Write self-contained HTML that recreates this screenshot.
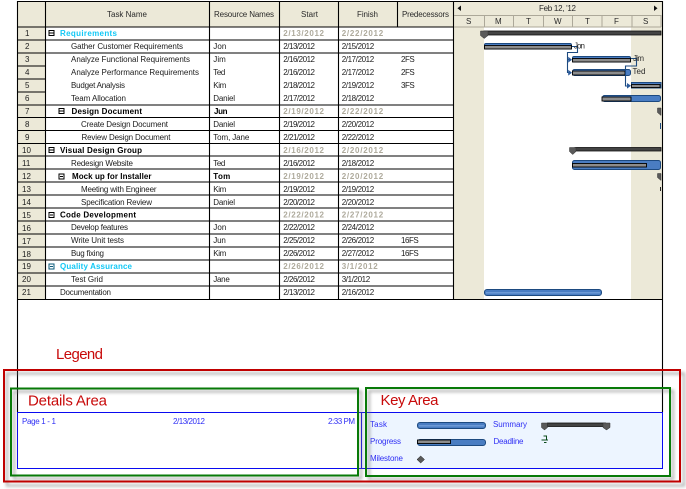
<!DOCTYPE html>
<html><head><meta charset="utf-8"><style>
html,body{margin:0;padding:0;background:#fff;width:686px;height:489px;overflow:hidden}
svg{display:block}
text{font-family:"Liberation Sans",sans-serif;font-size:8px;fill:#1c1c1c}
.b{font-weight:bold;fill:#000}
.c{font-weight:bold;fill:#12c8f5}
.g{font-weight:bold;fill:#aeaa9c}
.h{fill:#2a2a2a}
.f{fill:#2f2ff5}
.r{font-size:15px;fill:#c80a0a}
.l{stroke:#000;stroke-width:1.1;fill:none}
.bar{fill:#4a7dc2;stroke:#1d4a80;stroke-width:1}
.pr{fill:#8c8c8c;stroke:#000;stroke-width:.9}
.con{fill:none;stroke:#1d4a80;stroke-width:1.1}
.sum{fill:#444;stroke:#111;stroke-width:.8}
.ar{fill:#5a5a5a;stroke:#333;stroke-width:.5}
</style></head><body>
<svg width="686" height="489" viewBox="0 0 686 489" xmlns="http://www.w3.org/2000/svg">
<defs><filter id="bl" x="-5%" y="-10%" width="110%" height="120%"><feGaussianBlur stdDeviation="1.6"/></filter></defs>

<!-- backgrounds -->
<rect x="18" y="2" width="27" height="297" fill="#ece9d8"/>
<rect x="45" y="2" width="409" height="25" fill="#ece9d8"/>
<rect x="454" y="2" width="208" height="25" fill="#ece9d8"/>
<rect x="454" y="27" width="30" height="272" fill="#ece9d8"/>
<rect x="631" y="27" width="31" height="272" fill="#ece9d8"/>
<rect x="362" y="412" width="300.5" height="56" fill="#edf5ff"/>

<!-- grid -->
<g class="l">
<path d="M17.5 1.5H662.5"/>
<path d="M18 27H454M18 40H454M18 53H454M18 66H45M18 79H45M18 92H45M18 105H454M18 117.5H454M18 130.5H454M18 143.5H454M18 156H454M18 169H454M18 182H454M18 195H454M18 208H454M18 221H454M18 234H454M18 247H454M18 260H454M18 273H454M18 286H454"/>
<path d="M17.5 299.5H662.5"/>
<path d="M17.5 1V412M45.5 2V299M209.5 2V299M279.5 2V299M338.5 2V299M397.5 2V27M453.5 2V299M662.5 1V412"/>
</g>

<!-- gantt header -->
<g stroke="#aca899" stroke-width="1" fill="none"><path d="M454 15.5H661M454 27H661M484.5 15V27M513.5 15V27M543.5 15V27M572.5 15V27M602 15V27M632 15V27M661 15V27"/></g>
<path d="M461 5.5V11L457.5 8.2Z" fill="#111"/><path d="M654 5.5V11L657.5 8.2Z" fill="#111"/>
<text class="h" x="539" y="11" textLength="37">Feb 12, '12</text>
<text class="h" x="466" y="24" textLength="6">S</text>
<text class="h" x="495" y="24" textLength="7">M</text>
<text class="h" x="526" y="24" textLength="5">T</text>
<text class="h" x="554" y="24" textLength="8">W</text>
<text class="h" x="585" y="24" textLength="5">T</text>
<text class="h" x="614" y="24" textLength="5">F</text>
<text class="h" x="643" y="24" textLength="6">S</text>

<!-- column headers -->
<text class="h" x="107" y="17" textLength="40">Task Name</text>
<text class="h" x="214" y="17" textLength="60">Resource Names</text>
<text class="h" x="301" y="17" textLength="17">Start</text>
<text class="h" x="357" y="17" textLength="21">Finish</text>
<text class="h" x="402" y="17" textLength="47">Predecessors</text>

<!-- ids -->
<g class="h">
<text x="25" y="36">1</text><text x="25" y="49">2</text><text x="25" y="62">3</text><text x="25" y="75">4</text><text x="25" y="88">5</text><text x="25" y="101">6</text><text x="25" y="114">7</text><text x="25" y="127">8</text><text x="25" y="140">9</text>
<text x="22" y="153">10</text><text x="22" y="166">11</text><text x="22" y="179">12</text><text x="22" y="192">13</text><text x="22" y="205">14</text><text x="22" y="218">15</text><text x="22" y="231">16</text><text x="22" y="244">17</text><text x="22" y="257">18</text><text x="22" y="269">19</text><text x="22" y="282">20</text><text x="22" y="295">21</text>
</g>

<!-- minus boxes -->
<g fill="none" stroke="#000" stroke-width="1">
<path d="M49 30.5h5v5h-5zM49 33H54"/>
<path d="M59 108.5h5v5h-5zM59 111H64"/>
<path d="M49 147.5h5v5h-5zM49 150H54"/>
<path d="M59 174h5v5h-5zM60 176.5H63"/>
<path d="M49 212.5h5v5h-5zM50 215H53"/>
<path d="M49 264h5v5h-5zM50 266.5H53" stroke="#0a5a7a"/>
</g>

<!-- task names -->
<text class="c" x="60" y="36" textLength="57">Requirements</text>
<text x="71" y="49" textLength="112">Gather  Customer  Requirements</text>
<text x="71" y="62" textLength="119">Analyze  Functional  Requirements</text>
<text x="71" y="75" textLength="128">Analyze  Performance  Requirements</text>
<text x="71" y="88" textLength="54">Budget Analysis</text>
<text x="71" y="101" textLength="55">Team Allocation</text>
<text class="b" x="71.5" y="114" textLength="70.5">Design Document</text>
<text x="81" y="127" textLength="87">Create Design Document</text>
<text x="81.5" y="140" textLength="89">Review Design Document</text>
<text class="b" x="60" y="153" textLength="82">Visual Design Group</text>
<text x="71" y="166" textLength="62">Redesign Website</text>
<text class="b" x="72" y="179" textLength="79.5">Mock up for Installer</text>
<text x="81" y="192" textLength="75.5">Meeting with Engineer</text>
<text x="81" y="205" textLength="71">Specification Review</text>
<text class="b" x="60" y="217.5" textLength="76">Code Development</text>
<text x="71" y="230" textLength="57">Develop features</text>
<text x="71" y="243" textLength="53">Write Unit tests</text>
<text x="71" y="256" textLength="33">Bug fixing</text>
<text class="c" x="60" y="269" textLength="72">Quality Assurance</text>
<text x="71" y="282" textLength="32">Test Grid</text>
<text x="60" y="295" textLength="51">Documentation</text>

<!-- resources -->
<text x="213.3" y="49" textLength="13">Jon</text>
<text x="213.3" y="62" textLength="12.5">Jim</text>
<text x="213.3" y="75" textLength="12">Ted</text>
<text x="213.3" y="88" textLength="13">Kim</text>
<text x="213.3" y="101" textLength="21.7">Daniel</text>
<text class="b" x="214" y="114" textLength="13.5">Jun</text>
<text x="213.3" y="127" textLength="21.7">Daniel</text>
<text x="213.3" y="140" textLength="36">Tom, Jane</text>
<text x="213.3" y="166" textLength="12">Ted</text>
<text class="b" x="213.3" y="179" textLength="17">Tom</text>
<text x="213.3" y="192" textLength="13">Kim</text>
<text x="213.3" y="205" textLength="21.7">Daniel</text>
<text x="213.3" y="230" textLength="13">Jon</text>
<text x="213.3" y="243" textLength="12.5">Jun</text>
<text x="213.3" y="256" textLength="13">Kim</text>
<text x="213.3" y="282" textLength="16.5">Jane</text>

<!-- start -->
<text class="g" x="283.3" y="36" textLength="40.7">2/13/2012</text>
<text x="283.3" y="49" textLength="31.7">2/13/2012</text>
<text x="283.3" y="62" textLength="31.7">2/16/2012</text>
<text x="283.3" y="75" textLength="31.7">2/16/2012</text>
<text x="283.3" y="88" textLength="31.7">2/18/2012</text>
<text x="283.3" y="101" textLength="31.7">2/17/2012</text>
<text class="g" x="283.3" y="114" textLength="40.7">2/19/2012</text>
<text x="283.3" y="127" textLength="31.7">2/19/2012</text>
<text x="283.3" y="140" textLength="31.7">2/21/2012</text>
<text class="g" x="283.3" y="153" textLength="40.7">2/16/2012</text>
<text x="283.3" y="166" textLength="31.7">2/16/2012</text>
<text class="g" x="283.3" y="179" textLength="40.7">2/19/2012</text>
<text x="283.3" y="192" textLength="31.7">2/19/2012</text>
<text x="283.3" y="205" textLength="31.7">2/20/2012</text>
<text class="g" x="283.3" y="217.5" textLength="40.7">2/22/2012</text>
<text x="283.3" y="230" textLength="31.7">2/22/2012</text>
<text x="283.3" y="243" textLength="31.7">2/25/2012</text>
<text x="283.3" y="256" textLength="31.7">2/26/2012</text>
<text class="g" x="283.3" y="269" textLength="40.7">2/26/2012</text>
<text x="283.3" y="282" textLength="31.7">2/26/2012</text>
<text x="283.3" y="295" textLength="31.7">2/13/2012</text>

<!-- finish -->
<text class="g" x="341.7" y="36" textLength="41.5">2/22/2012</text>
<text x="341.7" y="49" textLength="32.5">2/15/2012</text>
<text x="341.7" y="62" textLength="32.5">2/17/2012</text>
<text x="341.7" y="75" textLength="32.5">2/17/2012</text>
<text x="341.7" y="88" textLength="32.5">2/19/2012</text>
<text x="341.7" y="101" textLength="32.5">2/18/2012</text>
<text class="g" x="341.7" y="114" textLength="41.5">2/22/2012</text>
<text x="341.7" y="127" textLength="32.5">2/20/2012</text>
<text x="341.7" y="140" textLength="32.5">2/22/2012</text>
<text class="g" x="341.7" y="153" textLength="41.5">2/20/2012</text>
<text x="341.7" y="166" textLength="32.5">2/18/2012</text>
<text class="g" x="341.7" y="179" textLength="41.5">2/20/2012</text>
<text x="341.7" y="192" textLength="32.5">2/19/2012</text>
<text x="341.7" y="205" textLength="32.5">2/20/2012</text>
<text class="g" x="341.7" y="217.5" textLength="41.5">2/27/2012</text>
<text x="341.7" y="230" textLength="32.5">2/24/2012</text>
<text x="341.7" y="243" textLength="32.5">2/26/2012</text>
<text x="341.7" y="256" textLength="32.5">2/27/2012</text>
<text class="g" x="341.7" y="269" textLength="36">3/1/2012</text>
<text x="341.7" y="282" textLength="28.5">3/1/2012</text>
<text x="341.7" y="295" textLength="32.5">2/16/2012</text>

<!-- predecessors -->
<text x="401" y="62" textLength="13.7">2FS</text>
<text x="401" y="75" textLength="13.7">2FS</text>
<text x="401" y="88" textLength="13.7">3FS</text>
<text x="401" y="243" textLength="17.7">16FS</text>
<text x="401" y="256" textLength="17.7">16FS</text>

<!-- gantt bars -->
<rect class="sum" x="484" y="31" width="177" height="4"/>
<path class="ar" d="M480.5 31H488V35.5L484.2 38.5L480.5 35.5Z"/>

<rect class="bar" x="484.5" y="43.5" width="87" height="5.5" rx="1.5"/>
<rect class="pr" x="484.5" y="45.5" width="87" height="3.5"/>
<rect class="bar" x="572.5" y="56.5" width="58" height="5.5" rx="1.5"/>
<rect class="pr" x="572.5" y="58.5" width="58" height="3.5"/>
<rect class="bar" x="572.5" y="69.5" width="58" height="6" rx="2"/>
<rect class="pr" x="572.5" y="71" width="52.5" height="4"/>
<rect class="bar" x="631.5" y="82.5" width="29.5" height="5.5"/>
<rect class="pr" x="631.5" y="84.5" width="28.5" height="3"/>
<rect class="bar" x="602.5" y="95.5" width="58" height="6" rx="2"/>
<rect class="pr" x="602" y="97" width="29" height="4"/>

<path class="con" d="M572 46.5H577.5V52.5H567.5V72.5H571M567.5 59.5H571"/>
<path class="con" d="M631 58.5H636.5V66H625.5V86H630"/>
<path d="M568.2 56.8L572 59.7L568.2 62.6ZM568.2 69.8L572 72.7L568.2 75.6ZM627 83L631 85.8L627 88.6Z" fill="#2a5a9a"/>
<text class="h" x="574" y="48.5" textLength="11">Jon</text>
<text class="h" x="633" y="61" textLength="11">Jim</text>
<text class="h" x="632.5" y="74" textLength="13">Ted</text>

<path class="ar" d="M657.5 108H661V115.5L657.5 112.5Z"/>
<rect x="660" y="123" width="1" height="6" fill="#1d4a80"/>
<rect class="sum" x="575" y="147.5" width="86" height="3.5"/>
<path class="ar" d="M569.5 147.5H576V151.5L572.7 154.5L569.5 151.5Z"/>
<rect class="bar" x="572.5" y="160.5" width="88" height="9" rx="2"/>
<rect class="pr" x="572.5" y="163.5" width="74" height="3.5"/>
<path class="ar" d="M657.5 173.5H661V180.5L657.5 177.5Z"/>
<rect x="660" y="187" width="1" height="4" fill="#222"/>
<rect class="bar" x="484.5" y="289.5" width="117" height="6" rx="2.5"/>
<rect x="486" y="292" width="114" height="1.5" fill="#6d9ad6"/>

<!-- blue boxes -->
<g fill="none" stroke="#0a0af0" stroke-width="1">
<rect x="17.5" y="412.5" width="645" height="56"/>
<path d="M361.5 412V468"/>
</g>
<text class="f" x="22" y="424" textLength="34">Page 1 - 1</text>
<text class="f" x="173" y="424" textLength="32">2/13/2012</text>
<text class="f" x="328" y="424" textLength="27">2:33 PM</text>

<!-- key area -->
<text class="f" x="370" y="427" textLength="17">Task</text>
<text class="f" x="370" y="444" textLength="31">Progress</text>
<text class="f" x="370" y="461" textLength="33">Milestone</text>
<text class="f" x="493" y="427" textLength="34">Summary</text>
<text class="f" x="493.5" y="444" textLength="30">Deadline</text>
<rect class="bar" x="417.5" y="422.5" width="68" height="6" rx="2.5"/>
<rect x="419" y="425" width="65" height="1.5" fill="#6d9ad6"/>
<rect class="bar" x="417.5" y="439.5" width="68" height="6" rx="2.5"/>
<rect class="pr" x="417.5" y="440" width="33" height="3.5"/>
<path d="M420.7 456L424.5 459.5L420.7 463L417 459.5Z" fill="#5a5a5a" stroke="#222" stroke-width=".5"/>
<rect class="sum" x="547.5" y="423" width="58" height="3.5"/>
<path class="ar" d="M541.5 423H547.5V427.5L544.5 430L541.5 427.5Z"/>
<path class="ar" d="M603 423H610V427.5L606.5 430L603 427.5Z"/>
<path d="M543.5 436H546.5V439.5M541.5 440H548M544 442.5H546.5" fill="none" stroke="#0a4a1a" stroke-width="1"/>

<!-- annotations -->
<g fill="none" stroke="#777" stroke-width="2" filter="url(#bl)" opacity=".65">
<rect x="7" y="373.5" width="677" height="112"/>
<rect x="14" y="391.5" width="347" height="87"/>
<rect x="369" y="391" width="304" height="88"/>
</g>
<rect x="4" y="370" width="676" height="111.5" fill="none" stroke="#c00000" stroke-width="2"/>
<rect x="11" y="388.5" width="347" height="87" fill="none" stroke="#087a08" stroke-width="2"/>
<rect x="366" y="388" width="304" height="88" fill="none" stroke="#087a08" stroke-width="2"/>
<text class="r" x="56" y="359" textLength="47">Legend</text>
<text class="r" x="28" y="405.5" textLength="79">Details Area</text>
<text class="r" x="380.5" y="405" textLength="58">Key Area</text>
</svg>
</body></html>
